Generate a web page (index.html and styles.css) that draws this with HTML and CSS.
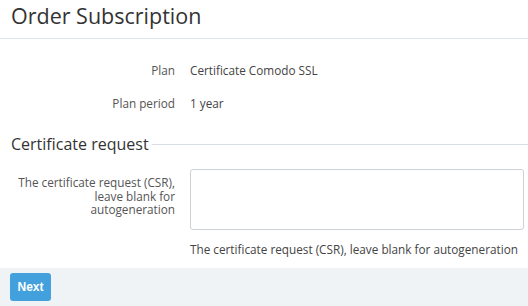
FILE: index.html
```html
<!DOCTYPE html>
<html>
<head>
<meta charset="utf-8">
<link rel="stylesheet" href="styles.css">
</head>
<body>
<div class="page">
  <h1 class="title">Order Subscription</h1>
  <div class="content">
    <div class="row">
      <div class="label">Plan</div>
      <div class="value">Certificate Comodo SSL</div>
    </div>
    <div class="row">
      <div class="label">Plan period</div>
      <div class="value">1 year</div>
    </div>
    <div class="section">
      <span class="section-title">Certificate request</span>
      <span class="section-line"></span>
    </div>
    <div class="row row-field">
      <div class="label label-wrap">The certificate request (CSR), leave blank for autogeneration</div>
      <div class="field">
        <textarea class="textarea"></textarea>
        <div class="help">The certificate request (CSR), leave blank for autogeneration</div>
      </div>
    </div>
  </div>
  <div class="footer">
    <button class="btn">Next</button>
  </div>
</div>
</body>
</html>
```
FILE: styles.css
```css
html, body {
  margin: 0;
  padding: 0;
  background: #fff;
}
body {
  font-family: "Open Sans", sans-serif;
  color: #333;
  width: 528px;
  height: 306px;
  overflow: hidden;
}
.page {
  display: flex;
  flex-direction: column;
  height: 306px;
}
.title {
  margin: 0;
  font-weight: 400;
  font-size: 21.5px;
  line-height: 28px;
  padding: 2px 11px 8px;
  border-bottom: 1px solid #dde3e8;
  color: #333;
}
.content {
  flex: 1;
}
.row {
  display: flex;
  font-size: 11.75px;
  line-height: 14px;
}
.row:nth-child(1) {
  margin-top: 24px;
}
.row:nth-child(2) {
  margin-top: 19px;
}
.label {
  width: 190px;
  text-align: right;
  color: #555;
  padding-right: 15px;
  flex: none;
  box-sizing: border-box;
}
.label-wrap {
  padding-left: 12px;
  line-height: 13.5px;
}
.value {
  color: #444;
}
.section {
  display: flex;
  align-items: center;
  margin: 23px 0 0 11px;
  font-size: 16px;
  line-height: 22px;
}
.section-title {
  color: #333;
}
.section-line {
  flex: 1;
  height: 1px;
  background: #d5dde6;
  margin-left: 3px;
}
.row-field {
  margin-top: 14px;
}
.row-field .label {
  padding-top: 7px;
}
.field {
  flex: 1;
  padding-right: 4px;
}
.textarea {
  display: block;
  box-sizing: border-box;
  width: 100%;
  height: 61px;
  border: 1px solid #ccd1d6;
  border-radius: 3px;
  resize: none;
  margin: 0;
  padding: 0;
}
.help {
  margin-top: 12px;
  color: #444;
  white-space: nowrap;
}
.footer {
  height: 38px;
  background: #f0f3f6;
  display: flex;
  align-items: center;
  padding-left: 10px;
}
.btn {
  border: none;
  background: #42a1dd;
  color: #fff;
  font-family: "Liberation Sans", Arial, sans-serif;
  font-weight: 700;
  font-size: 12px;
  width: 41px;
  height: 28px;
  border-radius: 3px;
  padding: 0;
}
```
